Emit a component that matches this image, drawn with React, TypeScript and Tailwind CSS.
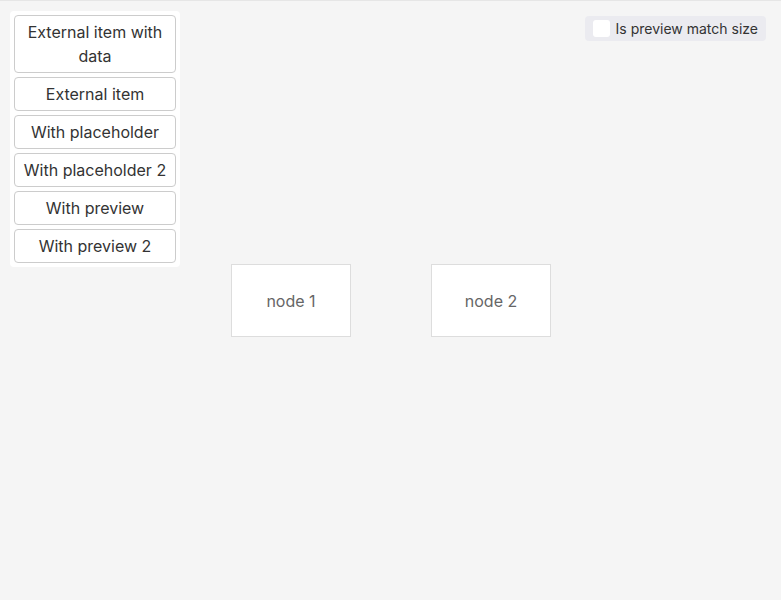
import React, { useState } from 'react'

const items = [
  'External item with data',
  'External item',
  'With placeholder',
  'With placeholder 2',
  'With preview',
  'With preview 2',
]

const nodes = [
  { id: 'node-1', label: 'node 1', left: 'left-[231px]' },
  { id: 'node-2', label: 'node 2', left: 'left-[431px]' },
]

const App = () => {
  const [matchSize, setMatchSize] = useState(false)

  return (
    <div className="relative h-[600px] w-full overflow-hidden border-t border-[#e6e6e6] bg-[#f5f5f5] font-['Inter',sans-serif]">
      {/* external drag sources */}
      <div className="absolute left-[10px] top-[10px] flex w-[170px] flex-col gap-[4px] rounded-[4px] bg-white p-[4px]">
        {items.map((item) => (
          <button
            key={item}
            type="button"
            className="w-full rounded-[4px] border border-[#cccccc] bg-white px-2 py-[4px] text-center text-[16px] leading-[24px] text-[#333333]"
          >
            {item}
          </button>
        ))}
      </div>

      <label className="absolute right-[15px] top-[15px] flex cursor-pointer items-center gap-[6px] rounded-[4px] bg-[#ebebf0] py-[4px] pl-[8px] pr-[8px] text-[14px] leading-[17px] text-[#333333]">
        <input
          type="checkbox"
          checked={matchSize}
          onChange={() => setMatchSize((v) => !v)}
          className="h-[17px] w-[17px] appearance-none rounded-[3px] bg-white"
        />
        Is preview match size
      </label>

      {nodes.map((node) => (
        <div
          key={node.id}
          className={`absolute top-[263px] flex h-[73px] w-[120px] items-center justify-center border border-[#dddddd] bg-white text-[16px] text-[#666666] ${node.left}`}
        >
          {node.label}
        </div>
      ))}
    </div>
  )
}

export default App
